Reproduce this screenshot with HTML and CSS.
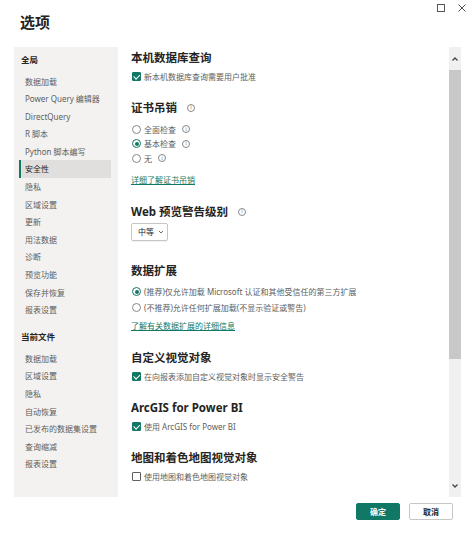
FILE: index.html
```html
<!DOCTYPE html>
<html lang="zh-CN">
<head>
<meta charset="utf-8">
<link rel="stylesheet" href="styles.css">
</head>
<body>
<div class="window">
  <div class="titlebar">
    <h1 class="title">选项</h1>
    <div class="winctl">
      <svg class="ctl" width="10" height="10" viewBox="0 0 10 10"><rect x="1.5" y="1.5" width="7" height="7" fill="none" stroke="#555" stroke-width="1"/></svg>
      <svg class="ctl" width="10" height="10" viewBox="0 0 10 10"><path d="M1.5 1.5 L8.5 8.5 M8.5 1.5 L1.5 8.5" stroke="#555" stroke-width="1"/></svg>
    </div>
  </div>
  <div class="body">
    <nav class="sidebar">
      <div class="group">
        <div class="ghead">全局</div>
        <div class="item">数据加载</div>
        <div class="item">Power Query 编辑器</div>
        <div class="item">DirectQuery</div>
        <div class="item">R 脚本</div>
        <div class="item">Python 脚本编写</div>
        <div class="item selected">安全性</div>
        <div class="item">隐私</div>
        <div class="item">区域设置</div>
        <div class="item">更新</div>
        <div class="item">用法数据</div>
        <div class="item">诊断</div>
        <div class="item">预览功能</div>
        <div class="item">保存并恢复</div>
        <div class="item">报表设置</div>
      </div>
      <div class="group g2">
        <div class="ghead">当前文件</div>
        <div class="item">数据加载</div>
        <div class="item">区域设置</div>
        <div class="item">隐私</div>
        <div class="item">自动恢复</div>
        <div class="item">已发布的数据集设置</div>
        <div class="item">查询缩减</div>
        <div class="item">报表设置</div>
      </div>
    </nav>
    <main class="main">
      <section class="sec s1">
        <h2 class="h">本机数据库查询</h2>
        <div class="row first"><span class="cb on"></span>新本机数据库查询需要用户批准</div>
      </section>
      <section class="sec">
        <h2 class="h">证书吊销 <span class="info hinfo">i</span></h2>
        <div class="radios">
          <div class="row rr"><span class="rb"></span>全面检查 <span class="info">i</span></div>
          <div class="row rr"><span class="rb on"></span>基本检查 <span class="info">i</span></div>
          <div class="row rr"><span class="rb"></span>无 <span class="info">i</span></div>
        </div>
        <a class="link l1">详细了解证书吊销</a>
      </section>
      <section class="sec">
        <h2 class="h">Web 预览警告级别 <span class="info hinfo">i</span></h2>
        <div class="dropdown">中等 <svg width="6" height="4" viewBox="0 0 6 4"><path d="M1 1 L3 3 L5 1" fill="none" stroke="#605e5c" stroke-width="0.9"/></svg></div>
      </section>
      <section class="sec s4">
        <h2 class="h">数据扩展</h2>
        <div class="radios r2">
          <div class="row rr2"><span class="rb on"></span>(推荐)仅允许加载 Microsoft 认证和其他受信任的第三方扩展</div>
          <div class="row rr2"><span class="rb"></span>(不推荐)允许任何扩展加载(不显示验证或警告)</div>
        </div>
        <a class="link l2">了解有关数据扩展的详细信息</a>
      </section>
      <section class="sec">
        <h2 class="h">自定义视觉对象</h2>
        <div class="row first"><span class="cb on"></span>在向报表添加自定义视觉对象时显示安全警告</div>
      </section>
      <section class="sec">
        <h2 class="h">ArcGIS for Power BI</h2>
        <div class="row first"><span class="cb on"></span>使用 ArcGIS for Power BI</div>
      </section>
      <section class="sec">
        <h2 class="h">地图和着色地图视觉对象</h2>
        <div class="row first"><span class="cb"></span>使用地图和着色地图视觉对象</div>
      </section>
    </main>
    <div class="scrollbar">
      <div class="sarrow"><svg width="8" height="6" viewBox="0 0 8 6"><path d="M1.5 4.5 L4 2 L6.5 4.5" fill="none" stroke="#444" stroke-width="1.3"/></svg></div>
      <div class="thumb"></div>
      <div class="track"></div>
      <div class="sarrow down"><svg width="8" height="6" viewBox="0 0 8 6"><path d="M1.5 1.5 L4 4 L6.5 1.5" fill="none" stroke="#444" stroke-width="1.3"/></svg></div>
    </div>
  </div>
  <div class="footer">
    <button class="btn primary">确定</button>
    <button class="btn">取消</button>
  </div>
</div>
</body>
</html>
```

FILE: styles.css
```css
* { box-sizing: border-box; }
html, body { margin: 0; padding: 0; background: #fff; }
body {
  font-family: "Noto Sans", "Noto Sans CJK SC", sans-serif;
  color: #252423;
}
.window {
  width: 474px;
  height: 538px;
  display: flex;
  flex-direction: column;
  overflow: hidden;
}
.titlebar {
  height: 47px;
  display: flex;
  justify-content: space-between;
  align-items: flex-start;
  padding-left: 20px;
  padding-right: 7px;
}
.title {
  margin: 12px 0 0;
  font-size: 15px;
  font-weight: 700;
  line-height: 20px;
  font-family: "Noto Sans CJK SC", sans-serif;
}
.winctl {
  display: flex;
  gap: 11px;
  padding-top: 3px;
}
.ctl { display: block; }
.body {
  height: 450px;
  display: flex;
}
.sidebar {
  width: 104px;
  margin-left: 14px;
  background: #f3f2f1;
  padding: 4px 7px 0 5px;
  font-size: 8px;
  color: #605e5c;
  font-family: "Noto Sans", "Noto Sans CJK SC", sans-serif;
}
.ghead {
  height: 18px;
  line-height: 18px;
  padding-left: 2px;
  font-weight: 700;
  font-size: 8.5px;
  color: #252423;
  margin-bottom: 3.5px;
}
.item {
  height: 17.6px;
  line-height: 17.6px;
  padding-left: 6px;
  white-space: nowrap;
}
.item.selected {
  background: #e1dfdd;
  border-left: 2px solid #117865;
  padding-left: 4px;
  color: #252423;
}
.g2 { margin-top: 9.5px; }
.main {
  flex: 1;
  padding: 3px 0 0 13px;
  overflow: hidden;
  font-size: 8px;
  color: #605e5c;
}
.sec { margin-top: 17px; }
.sec.s1 { margin-top: 0; }
.sec.s4 { margin-top: 22px; }
.h {
  margin: 0;
  height: 16px;
  line-height: 16px;
  font-size: 11.5px;
  font-weight: 700;
  color: #252423;
  display: flex;
  align-items: center;
  white-space: nowrap;
}
.row {
  height: 14px;
  display: flex;
  align-items: center;
  white-space: nowrap;
}
.row.first { margin-top: 3px; }
.radios { margin-top: 6px; }
.rr { height: 14.5px; }
.r2 { margin-top: 5.5px; }
.rr2 { height: 15.5px; }
.cb {
  width: 9px;
  height: 9px;
  border: 1px solid #605e5c;
  border-radius: 1px;
  margin: 0 3px 0 1px;
  position: relative;
  flex: none;
  background: #fff;
}
.cb.on {
  background: #117865;
  border-color: #117865;
}
.cb.on::after {
  content: "";
  position: absolute;
  left: 2px;
  top: 0px;
  width: 2.5px;
  height: 4.5px;
  border: solid #fff;
  border-width: 0 1.3px 1.3px 0;
  transform: rotate(45deg);
}
.rb {
  width: 9px;
  height: 9px;
  border: 1px solid #8a8886;
  border-radius: 50%;
  margin: 0 3px 0 1px;
  flex: none;
  position: relative;
  background: #fff;
}
.rb.on { border-color: #117865; }
.rb.on::after {
  content: "";
  position: absolute;
  left: 1.5px;
  top: 1.5px;
  width: 4px;
  height: 4px;
  border-radius: 50%;
  background: #117865;
}
.info {
  display: inline-flex;
  align-items: center;
  justify-content: center;
  width: 8px;
  height: 8px;
  border: 0.8px solid #8a8886;
  border-radius: 50%;
  font-size: 5.5px;
  line-height: 1;
  color: #8a8886;
  font-weight: 400;
  margin-left: 6px;
  font-family: "Liberation Serif", serif;
}
.hinfo { margin-left: 10px; }
.link {
  display: block;
  height: 14px;
  line-height: 14px;
  color: #117865;
  text-decoration: underline;
  font-size: 8px;
}
.l1 { margin-top: 7px; }
.l2 { margin-top: 4px; }
.dropdown {
  margin-top: 3px;
  width: 37px;
  height: 18px;
  border: 1px solid #c8c6c4;
  border-radius: 2px;
  display: flex;
  align-items: center;
  padding-left: 6px;
  gap: 4px;
  color: #252423;
  box-shadow: 0 1px 1px rgba(0,0,0,0.06);
}
.scrollbar {
  width: 12px;
  margin-right: 13px;
  display: flex;
  flex-direction: column;
  background: #f0f0f0;
}
.sarrow {
  height: 23px;
  display: flex;
  align-items: center;
  justify-content: center;
}
.sarrow.down { height: 22px; }
.thumb {
  height: 289px;
  background: #c8c8c8;
}
.track { flex: 1; }
.footer {
  flex: 1;
  display: flex;
  justify-content: flex-end;
  align-items: flex-start;
  padding: 6px 21px 0 0;
  gap: 9px;
}
.btn {
  width: 44px;
  height: 17px;
  font-size: 8px;
  font-family: "Noto Sans CJK SC", sans-serif;
  font-weight: 700;
  border: 1px solid #c8c6c4;
  border-radius: 2px;
  background: #fff;
  color: #252423;
  padding: 0;
}
.btn.primary {
  background: #117865;
  border-color: #117865;
  color: #fff;
}
```
